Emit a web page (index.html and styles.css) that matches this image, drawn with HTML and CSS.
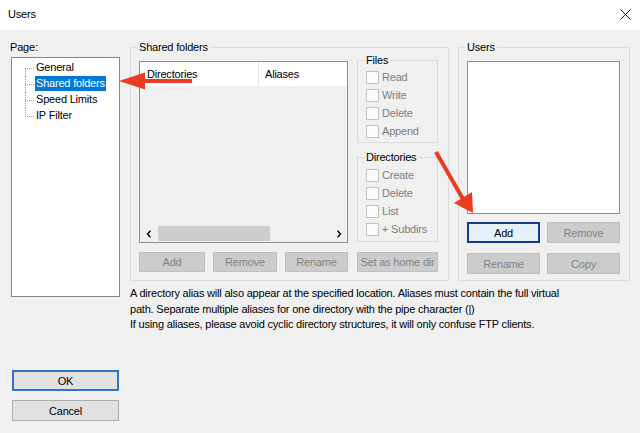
FILE: index.html
```html
<!DOCTYPE html>
<html>
<head>
<meta charset="utf-8">
<title>Users</title>
<link rel="stylesheet" href="styles.css">
</head>
<body>
<div class="window">
  <div class="titlebar">
    <span class="title">Users</span>
    <svg class="close" width="11" height="11" viewBox="0 0 11 11"><path d="M0.5 0.5L10.5 10.5M10.5 0.5L0.5 10.5" stroke="#1a1a1a" stroke-width="1" fill="none"/></svg>
  </div>
  <div class="body">
    <div class="leftcol">
      <div class="page-label">Page:</div>
      <ul class="tree">
        <li><span>General</span></li>
        <li class="sel"><span>Shared folders</span></li>
        <li><span>Speed Limits</span></li>
        <li><span>IP Filter</span></li>
      </ul>
      <div class="dlg-buttons">
        <button class="btn ok">OK</button>
        <button class="btn">Cancel</button>
      </div>
    </div>
    <div class="rightcol">
      <div class="groups">
        <fieldset class="group shared">
          <legend>Shared folders</legend>
          <div class="shared-grid">
            <div class="dirlist">
              <div class="dirhead">
                <div class="c1">Directories</div>
                <div class="c2">Aliases</div>
              </div>
              <div class="dirbody"></div>
              <div class="hscroll">
                <div class="sb-btn"><svg width="6" height="8" viewBox="0 0 6 8"><path d="M4.5 0.8L1.5 4L4.5 7.2" stroke="#000" stroke-width="1.4" fill="none"/></svg></div>
                <div class="sb-thumb"></div>
                <div class="sb-track"></div>
                <div class="sb-btn"><svg width="6" height="8" viewBox="0 0 6 8"><path d="M1.5 0.8L4.5 4L1.5 7.2" stroke="#000" stroke-width="1.4" fill="none"/></svg></div>
              </div>
            </div>
            <div class="perms">
              <fieldset class="group sub files">
                <legend>Files</legend>
                <div class="chk"><span class="box"></span>Read</div>
                <div class="chk"><span class="box"></span>Write</div>
                <div class="chk"><span class="box"></span>Delete</div>
                <div class="chk"><span class="box"></span>Append</div>
              </fieldset>
              <fieldset class="group sub dirs">
                <legend>Directories</legend>
                <div class="chk"><span class="box"></span>Create</div>
                <div class="chk"><span class="box"></span>Delete</div>
                <div class="chk"><span class="box"></span>List</div>
                <div class="chk"><span class="box"></span>+ Subdirs</div>
              </fieldset>
            </div>
          </div>
          <div class="btnrow">
            <button class="dbtn w-add">Add</button>
            <button class="dbtn w-rem">Remove</button>
            <button class="dbtn w-ren">Rename</button>
            <button class="dbtn w-home">Set as home dir</button>
          </div>
        </fieldset>
        <fieldset class="group users">
          <legend>Users</legend>
          <div class="ulist"></div>
          <div class="ubtns">
            <button class="ubtn focus">Add</button>
            <button class="ubtn dbtn">Remove</button>
            <button class="ubtn dbtn">Rename</button>
            <button class="ubtn dbtn">Copy</button>
          </div>
        </fieldset>
      </div>
      <p class="note">A directory alias will also appear at the specified location. Aliases must contain the full virtual<br>path. Separate multiple aliases for one directory with the pipe character (|)</p>
      <p class="note second">If using aliases, please avoid cyclic directory structures, it will only confuse FTP clients.</p>
    </div>
  </div>
  <svg class="annot" width="640" height="433" viewBox="0 0 640 433">
    <rect x="140" y="79" width="52" height="4" fill="#ec3b22"/>
    <polygon points="119,81 145,72.5 145,89.5" fill="#ec3b22"/>
    <line x1="436" y1="152" x2="463" y2="199" stroke="#ec3b22" stroke-width="4"/>
    <polygon points="473,213 454,203 472,192" fill="#ec3b22"/>
  </svg>
</div>
</body>
</html>
```

FILE: styles.css
```css
* { box-sizing: border-box; }
html, body { margin: 0; padding: 0; }
body {
  width: 640px;
  height: 433px;
  overflow: hidden;
  background: #f0f0f0;
  font-family: "Liberation Sans", Arial, sans-serif;
  font-size: 11px;
  letter-spacing: -0.2px;
  color: #000;
}
button { letter-spacing: -0.2px; }
.window { position: relative; width: 640px; height: 433px; }

.titlebar {
  height: 30px;
  background: #fff;
  display: flex;
  align-items: center;
  justify-content: space-between;
  padding: 0 9px 2px 8px;
}
.title { font-size: 11px; line-height: 14px; color: #000; }
.close { display: block; }

.body { display: flex; column-gap: 10px; padding: 10px 0 0 11px; }

.leftcol { width: 109px; display: flex; flex-direction: column; }
.page-label { line-height: 14px; margin-left: -1px; }
.tree {
  list-style: none;
  margin: 3px 0 0;
  padding: 2px 0 0;
  height: 240px;
  border: 1px solid #828790;
  background: #fff;
}
.tree li { position: relative; height: 16px; padding-left: 23px; }
.tree li span { display: inline-block; line-height: 15px; padding: 0 1px; }
.tree li.sel span { background: #0078d7; color: #fff; }
.tree li::before {
  content: "";
  position: absolute;
  left: 13px;
  top: 8px;
  width: 9px;
  border-top: 1px dotted #a0a0a0;
}
.tree li::after {
  content: "";
  position: absolute;
  left: 13px;
  top: 0;
  height: 16px;
  border-left: 1px dotted #a0a0a0;
}
.tree li:first-child::after { top: 8px; height: 8px; }
.tree li:last-child::after { height: 9px; }

.dlg-buttons {
  margin-top: 73px;
  padding-left: 1px;
  display: flex;
  flex-direction: column;
  row-gap: 9px;
}
.btn {
  width: 107px;
  height: 21px;
  border: 1px solid #adadad;
  background: #e1e1e1;
  font: inherit;
  color: #000;
  padding: 0;
}
.btn.ok { border: 2px solid #2f74c6; }

.rightcol { width: 500px; }
.groups { display: flex; column-gap: 9px; align-items: stretch; }
fieldset.group { margin: 0; border: 1px solid #dadada; min-width: 0; }
fieldset.group legend { padding: 0 2px; margin-left: -2px; line-height: 14px; }

.shared { width: 319px; padding: 0 10px 8px 8px; }
.shared-grid { display: flex; column-gap: 9px; align-items: flex-start; }
.dirlist {
  width: 209px;
  height: 182px;
  margin-top: 7px;
  border: 1px solid #8e8e8e;
  background: #f0f0f0;
  display: flex;
  flex-direction: column;
}
.dirhead { height: 24px; background: #fff; display: flex; }
.dirhead .c1 { width: 119px; border-right: 1px solid #e5e5e5; padding-left: 7px; line-height: 24px; }
.dirhead .c2 { padding-left: 6px; line-height: 24px; }
.dirbody { flex: 1; }
.hscroll { height: 17px; display: flex; align-items: center; background: #f0f0f0; }
.sb-btn { width: 17px; height: 17px; display: flex; align-items: center; justify-content: center; }
.sb-thumb { width: 112px; height: 15px; margin-left: 1px; background: #cdcdcd; }
.sb-track { flex: 1; }

.perms { width: 81px; display: flex; flex-direction: column; row-gap: 7px; margin-top: -1px; }
.sub { padding: 1px 0 2px 8px; }
.sub.dirs { padding: 2px 0 3px 8px; }
.chk { display: flex; align-items: center; column-gap: 3px; height: 18px; color: #7e7e7e; white-space: nowrap; }
.box { width: 13px; height: 13px; border: 1px solid #c2c2c2; background: #fcfcfc; flex: none; }

.btnrow { display: flex; column-gap: 8px; margin-top: 9px; }
.dbtn {
  height: 20px;
  background: #cccccc;
  border: 1px solid #bfbfbf;
  color: #838383;
  font: inherit;
  padding: 0;
  white-space: nowrap;
}
.w-add { width: 66px; }
.w-rem { width: 64px; }
.w-ren { width: 63px; }
.w-home { width: 81px; margin-left: 1px; }

.users { width: 172px; padding: 7px 9px 6px 8px; }
.ulist { width: 153px; height: 153px; border: 1px solid #8e8e8e; background: #fff; }
.ubtns {
  display: grid;
  grid-template-columns: 73px 73px;
  column-gap: 7px;
  row-gap: 10px;
  margin-top: 8px;
}
.ubtn { height: 21px; font: inherit; padding: 0; }
.ubtn.focus { border: 2px solid #173b8a; background: #e5f1fb; color: #000; }

.note { margin: 5px 0 0; line-height: 15.5px; white-space: nowrap; }
.note.second { margin-top: 0; }

.annot { position: absolute; left: 0; top: 0; pointer-events: none; }
```
